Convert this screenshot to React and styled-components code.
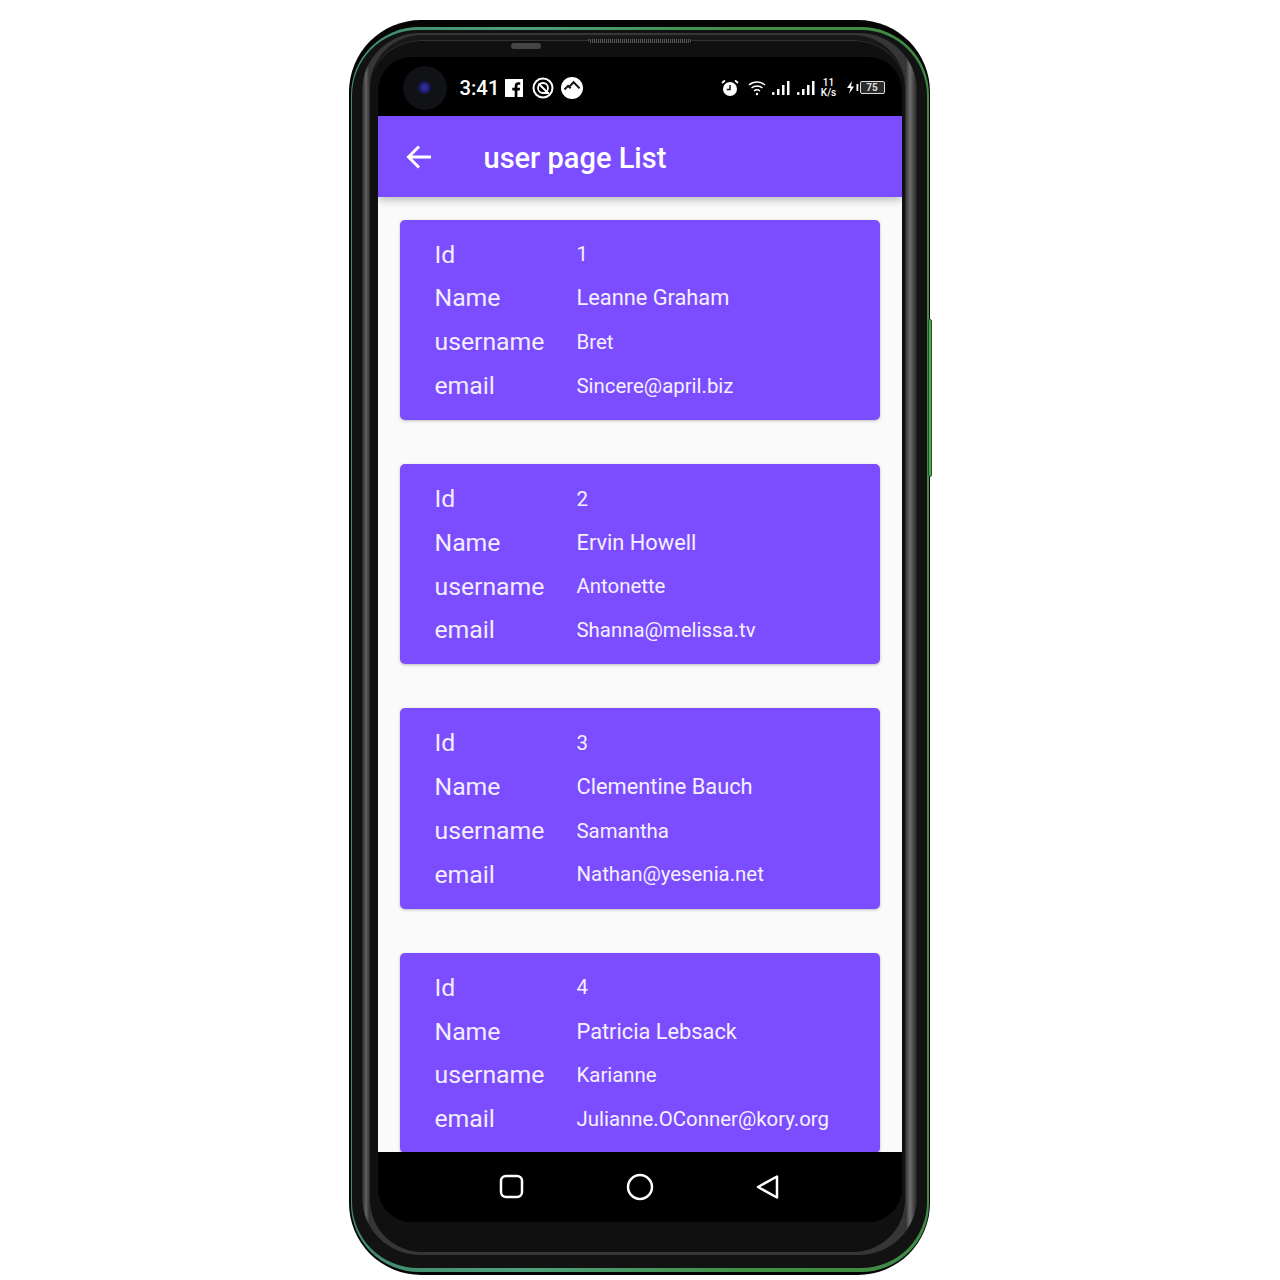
import React from "react";
import styled, { createGlobalStyle } from "styled-components";

const Global = createGlobalStyle`
  html, body { margin: 0; background: #fff; }
  body { font-family: Roboto, "Liberation Sans", sans-serif; }
  #root { width: 1280px; height: 1280px; overflow: hidden; }
`;

const Page = styled.div`
  display: flex;
  justify-content: center;
  padding: 20px 2px 0 0;
`;
const Shell = styled.div`
  position: relative;
  width: 581px;
  height: 1255px;
  box-sizing: border-box;
  background: #050505;
  border-radius: 72px;
  padding: 7px 1px 3px 2px;
`;
const SideButton = styled.div`
  position: absolute;
  right: -2px;
  top: 299px;
  width: 4px;
  height: 158px;
  box-sizing: border-box;
  background: #4aa84f;
  border: 1px solid #24552a;
  border-radius: 2px;
`;
const GreenRing = styled.div`
  box-sizing: border-box;
  height: 100%;
  background: linear-gradient(90deg, #3f8a6c 0%, #4f9f7c 30%, #3f8f45 70%, #3f8a45 100%);
  border-radius: 68px;
  padding: 3px 2px 4px 1.500px;
`;
const MidRing = styled.div`
  box-sizing: border-box;
  height: 100%;
  background: #121212;
  border-radius: 66px;
  padding: 3px 10px 13px 9.500px;
`;
const GrayRing = styled.div`
  box-sizing: border-box;
  height: 100%;
  border-radius: 58px;
  padding: 2px 12px 3px 8px;
  background:
    linear-gradient(90deg, #222 0, #626262 4px, #2a2a2a 8px, transparent 8px, transparent calc(100% - 12px), #2a2a2a calc(100% - 12px), #6e6e6e calc(100% - 7px), #222 100%),
    #363636;
`;
const Inner = styled.div`
  position: relative;
  box-sizing: border-box;
  height: 100%;
  background: #101010;
  border-radius: 52px;
  border-top: 5px solid #181818;
  padding: 17px 3px 30px 8px;
  box-shadow: inset 0 1px 0 #333;
`;
const Earpiece = styled.div`
  position: absolute;
  top: 3px;
  left: 141px;
  width: 30px;
  height: 6px;
  border-radius: 3px;
  background: #444;
`;
const Speaker = styled.div`
  position: absolute;
  top: -1px;
  left: 218px;
  width: 104px;
  height: 4px;
  border-radius: 0 0 4px 4px;
  background: repeating-linear-gradient(90deg, #555 0, #555 1px, #1a1a1a 1px, #1a1a1a 2px);
`;
const Screen = styled.div`
  display: flex;
  flex-direction: column;
  height: 100%;
  background: #000;
  border-radius: 34px;
  overflow: hidden;
`;
const StatusBar = styled.div`
  flex: none;
  height: 59px;
  display: flex;
  align-items: center;
  padding: 2px 17px 0 25px;
  box-sizing: border-box;
  color: #fff;
`;
const Camera = styled.div`
  width: 44px;
  height: 44px;
  border-radius: 50%;
  background: #101216;
  display: flex;
  align-items: center;
  justify-content: center;
  margin-right: 13px;
  &::after {
    content: "";
    width: 13px;
    height: 13px;
    border-radius: 50%;
    background: radial-gradient(circle, #3a36a8 0, #1d1a66 55%, #0a0a20 100%);
  }
`;
const Time = styled.span`
  font-size: 20.300px;
  font-weight: 500;
  margin-right: 6px;
`;
const IconRow = styled.div`
  display: flex;
  align-items: center;
  gap: ${(p) => p.$gap || 0}px;
  margin-left: ${(p) => p.$left || 0}px;
`;
const Spacer = styled.div`
  flex: 1;
`;
const Speed = styled.div`
  display: flex;
  flex-direction: column;
  align-items: center;
  font-size: 10px;
  line-height: 10px;
  font-weight: 500;
  width: 18px;
  margin: 0 8px 0 3px;
`;
const Battery = styled.div`
  width: 23px;
  height: 11px;
  margin-left: 1px;
  border: 1.500px solid #ddd;
  border-radius: 2px;
  font-size: 10px;
  line-height: 11px;
  font-weight: 700;
  text-align: center;
  background: #2b2b2b;
  color: #ddd;
`;
const AppBar = styled.header`
  flex: none;
  position: relative;
  z-index: 1;
  height: 81px;
  display: flex;
  align-items: center;
  background: #7c4dff;
  color: #fff;
  box-shadow: 0 3px 8px rgba(0, 0, 0, 0.25);
  padding: 0 0 0 28px;
`;
const Title = styled.h1`
  margin: 2px 0 0 52px;
  font-size: 29px;
  font-weight: 500;
  letter-spacing: 0;
`;
const List = styled.main`
  flex: 1;
  min-height: 0;
  overflow: hidden;
  background: #fafafa;
  padding: 22.700px 22px 0;
  display: flex;
  flex-direction: column;
  gap: 44px;
`;
const Card = styled.section`
  flex: none;
  box-sizing: border-box;
  height: 200.400px;
  padding: 12.600px 0 0 35px;
  background: #7c4dff;
  border-radius: 5px;
  box-shadow: 0 1px 3px rgba(0, 0, 0, 0.25);
  color: #fff;
  display: grid;
  grid-template-columns: 142px 1fr;
  grid-auto-rows: 43.800px;
  align-items: center;
  align-content: start;
`;
const Label = styled.span`
  font-size: 24.750px;
  color: #f2edff;
`;
const Value = styled.span`
  font-size: ${(p) => (p.$large ? 21.8 : 20.4)}px;
  color: #f4f0ff;
`;
const NavBar = styled.nav`
  flex: none;
  height: 70px;
  display: flex;
  align-items: center;
  justify-content: center;
  gap: 100px;
  padding-left: 1px;
  background: #000;
`;

const users = [
  ["1", "Leanne Graham", "Bret", "Sincere@april.biz"],
  ["2", "Ervin Howell", "Antonette", "Shanna@melissa.tv"],
  ["3", "Clementine Bauch", "Samantha", "Nathan@yesenia.net"],
  ["4", "Patricia Lebsack", "Karianne", "Julianne.OConner@kory.org"],
];
const labels = ["Id", "Name", "username", "email"];

const Fb = () => (
  <svg width="18" height="18" viewBox="0 0 18 18">
    <path fill="#fff" d="M0 0h18v18h-5.600v-6.600h2.300l.4-2.700h-2.700V7c0-.8.3-1.300 1.400-1.300h1.400V3.300c-.6-.1-1.300-.1-2-.1-2.100 0-3.500 1.300-3.500 3.600v1.900H7.300v2.700h2.400V18H0z" />
  </svg>
);
const RingIcon = () => (
  <svg width="22" height="22" viewBox="0 0 22 22" style={{ marginLeft: 9 }} fill="none" stroke="#fff">
    <circle cx="11" cy="11" r="9.500" strokeWidth="2" />
    <circle cx="11" cy="11" r="5" strokeWidth="1.800" />
    <path d="M6.500 6.500l9 9M11 16h6" strokeWidth="1.800" />
  </svg>
);
const Mountain = () => (
  <svg width="22" height="22" viewBox="0 0 22 22" style={{ marginLeft: 7 }}>
    <circle cx="11" cy="11" r="11" fill="#fff" />
    <path fill="none" stroke="#111" strokeWidth="2" d="M3.500 12.500l3.600-3.600 2.600 2.400M8.600 9.400l4-4.200 6 6.200" />
  </svg>
);
const Alarm = () => (
  <svg width="18" height="18" viewBox="0 0 18 18">
    <circle cx="9" cy="10" r="7" fill="#fff" />
    <path stroke="#111" strokeWidth="1.500" fill="none" d="M9 6v4.500H5.800" />
    <path stroke="#fff" strokeWidth="1.800" d="M1 4l3-2.600M17 4l-3-2.600" />
  </svg>
);
const Wifi = () => (
  <svg width="18" height="16" viewBox="0 0 18 16" fill="none" stroke="#fff" strokeWidth="1.500" style={{ marginLeft: 9 }}>
    <path d="M1 5c4.500-4 11.500-4 16 0M3.500 8c3-2.600 8-2.600 11 0M6 11c1.700-1.400 4.300-1.400 6 0" />
    <circle cx="9" cy="14" r="1.200" fill="#fff" stroke="none" />
  </svg>
);
const Signal = () => (
  <svg width="20" height="14" viewBox="0 0 20 14" fill="#fff">
    <rect x="0" y="11" width="2.500" height="3" rx="1" />
    <rect x="5" y="8" width="2.500" height="6" />
    <rect x="10" y="4" width="2.500" height="10" />
    <rect x="15" y="0" width="2.500" height="14" />
  </svg>
);
const Bolt = () => (
  <svg width="13" height="13" viewBox="0 0 13 13" fill="#fff">
    <path d="M6 0L1 7h3.500L3 13l5-7.500H5z" />
    <rect x="10.500" y="3" width="1.800" height="7" />
  </svg>
);
const Back = () => (
  <svg width="26" height="24" viewBox="0 0 26 24" fill="none" stroke="#fff" strokeWidth="3">
    <path d="M25 12H3M13 1.500L2.500 12 13 22.500" />
  </svg>
);
const NavSquare = () => (
  <svg width="28" height="28" viewBox="0 0 28 28" fill="none" stroke="#fff" strokeWidth="2.500">
    <rect x="3" y="3" width="21" height="21" rx="5" />
  </svg>
);
const NavCircle = () => (
  <svg width="28" height="28" viewBox="0 0 28 28" fill="none" stroke="#fff" strokeWidth="2.500">
    <circle cx="14" cy="14" r="12" />
  </svg>
);
const NavBack = () => (
  <svg width="28" height="28" viewBox="0 0 28 28" fill="none" stroke="#fff" strokeWidth="2.500" strokeLinejoin="round">
    <path d="M4 14L23 3.500v21z" />
  </svg>
);

export default function App() {
  return (
    <Page>
      <Global />
      <Shell>
        <SideButton />
        <GreenRing>
          <MidRing>
            <GrayRing>
              <Inner>
                <Earpiece />
                <Speaker />
                <Screen>
                  <StatusBar>
                    <Camera />
                    <Time>3:41</Time>
                    <IconRow>
                      <Fb />
                      <RingIcon />
                      <Mountain />
                    </IconRow>
                    <Spacer />
                    <IconRow>
                      <Alarm />
                      <Wifi />
                    </IconRow>
                    <IconRow $gap={5} $left={6}>
                      <Signal />
                      <Signal />
                    </IconRow>
                    <Speed>
                      <span>11</span>
                      <span>K/s</span>
                    </Speed>
                    <Bolt />
                    <Battery>75</Battery>
                  </StatusBar>
                  <AppBar>
                    <Back />
                    <Title>user page List</Title>
                  </AppBar>
                  <List>
                    {users.map((u) => (
                      <Card key={u[0]}>
                        {labels.map((l, i) => (
                          <React.Fragment key={l}>
                            <Label>{l}</Label>
                            <Value $large={i === 1}>{u[i]}</Value>
                          </React.Fragment>
                        ))}
                      </Card>
                    ))}
                  </List>
                  <NavBar>
                    <NavSquare />
                    <NavCircle />
                    <NavBack />
                  </NavBar>
                </Screen>
              </Inner>
            </GrayRing>
          </MidRing>
        </GreenRing>
      </Shell>
    </Page>
  );
}
